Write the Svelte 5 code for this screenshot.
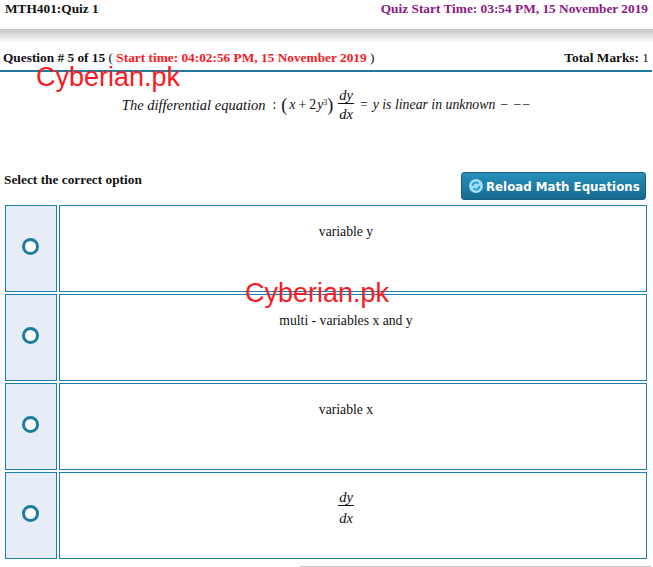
<script>
    const options = [
        { text: "variable y" },
        { text: "multi - variables x and y" },
        { text: "variable x" },
        { fraction: true }
    ];
</script>

<div class="topbar">
    <b class="course">MTH401:Quiz 1</b>
    <b class="quizTime">Quiz Start Time: 03:54 PM, 15 November 2019</b>
</div>
<div class="shadow"></div>

<section class="page">
    <div class="questionHead">
        <span><b>Question # 5 of 15</b> ( <b class="red">Start time: 04:02:56 PM, 15 November 2019</b> )</span>
        <span><b>Total Marks:</b> 1</span>
    </div>

    <div class="equation">
        <i class="lead">The differential equation</i>
        <span class="colon">:</span>
        <span class="group"><span class="paren">(</span><i>x</i><span class="plus">+</span><span>2</span><i>y</i><sup>3</sup><span class="paren">)</span></span>
        <span class="frac eqFrac"><i>dy</i><i class="under">dx</i></span>
        <span class="equals">=</span>
        <i>y is linear in unknown</i>
        <span class="dashes">&minus; &minus;&minus;</span>
    </div>

    <div class="selectRow">
        <b>Select the correct option</b>
        <button class="reload">
            <svg width="14" height="14" viewBox="0 0 14 14">
                <circle cx="7" cy="7" r="7" fill="#a5dcf5" />
                <path d="M3.5 7a3.5 3.5 0 0 1 6-2.4M10.5 7a3.5 3.5 0 0 1-6 2.4" fill="none" stroke="#2b9fd6" stroke-width="2" />
            </svg>
            <span class="reloadText">Reload Math Equations</span>
        </button>
    </div>

    <div class="options">
        {#each options as option}
        <div class="row">
            <div class="pick"><span class="radio"></span></div>
            <div class="answer">
                {#if option.fraction}
                <span class="frac answerFrac"><i>dy</i><i class="under">dx</i></span>
                {:else}
                {option.text}
                {/if}
            </div>
        </div>
        {/each}
    </div>
    <div class="bottomLine"></div>

    <span class="mark markOne">Cyberian.pk</span>
    <span class="mark markTwo">Cyberian.pk</span>
</section>

<style>
    :global(body) {
        background: #fff;
        color: #111;
        font-family: "Liberation Serif", serif;
        font-size: 13.33px;
    }
    .topbar {
        display: flex;
        justify-content: space-between;
        align-items: center;
        height: 29px;
        padding: 0 5px 11px 5px;
        box-sizing: border-box;
    }
    .quizTime {
        color: #8a1a82;
    }
    .shadow {
        height: 14px;
        background: linear-gradient(#c4c4c4, #fff);
    }
    .page {
        position: relative;
    }
    .questionHead {
        display: flex;
        justify-content: space-between;
        align-items: center;
        height: 25px;
        margin-right: 1px;
        padding: 2px 3px 0;
        border-bottom: 2px solid #1f7a9c;
    }
    .red {
        color: #fb1a1f;
    }
    .equation {
        display: flex;
        justify-content: center;
        align-items: center;
        height: 36px;
        margin-top: 15px;
        font-size: 13.8px;
        white-space: pre;
    }
    .lead {
        font-size: 14.5px;
    }
    .group {
        display: flex;
        align-items: center;
    }
    .group sup {
        font-size: 8px;
        align-self: flex-start;
        margin-top: 3px;
    }
    .paren {
        font-size: 18px;
    }
    .group i {
        margin-left: 1px;
    }
    .group .paren:first-child {
        margin-right: 1px;
    }
    .group .plus {
        margin: 0 3px;
    }
    .colon {
        margin: 0 5px 0 7px;
    }
    .dashes {
        margin-left: 5px;
        letter-spacing: 1px;
    }
    .frac {
        display: inline-flex;
        flex-direction: column;
        align-items: center;
        line-height: 15px;
        font-size: 14.5px;
    }
    .eqFrac {
        margin: 0 6px 0 5px;
    }
    .equals {
        margin-right: 5px;
    }
    .under {
        border-top: 1px solid #111;
        padding: 3px 1px 0;
    }
    .answerFrac {
        position: relative;
        top: -1px;
    }
    .answerFrac .under {
        padding-top: 5px;
    }
    .selectRow {
        display: flex;
        justify-content: space-between;
        align-items: center;
        height: 28px;
        margin-top: 49px;
        padding: 0 7px 0 4px;
    }
    .selectRow b {
        position: relative;
        top: -6px;
    }
    .reload {
        display: flex;
        align-items: center;
        gap: 3px;
        width: 185px;
        height: 28px;
        padding: 0 0 0 7px;
        border: 1px solid #17607f;
        border-radius: 3px;
        background: linear-gradient(#2791bb, #176a8f);
        color: #fff;
        font-family: "DejaVu Sans", sans-serif;
        font-size: 11.8px;
        font-weight: bold;
    }
    .reloadText {
        position: relative;
        top: 1px;
    }
    .options {
        display: flex;
        flex-direction: column;
        gap: 2px;
        margin: 5px 6px 0 5px;
    }
    .row {
        display: flex;
        gap: 2px;
        height: 87px;
    }
    .pick, .answer {
        border: 1px solid #1b80ac;
        box-sizing: border-box;
    }
    .pick {
        display: flex;
        justify-content: center;
        align-items: center;
        flex: 0 0 52px;
        padding: 0 1px 4px 0;
        background: #e6edf7;
    }
    .radio {
        width: 11px;
        height: 11px;
        border: 3px solid #1f7a9f;
        border-radius: 50%;
        background: #fff;
    }
    .answer {
        flex: 1;
        padding: 18px 14px 0 0;
        text-align: center;
        font-size: 13.7px;
    }
    .bottomLine {
        height: 1px;
        margin: 7px 2px 0 300px;
        background: #c4c4c4;
    }
    .mark {
        position: absolute;
        color: #fb1a1f;
        font-family: "Liberation Sans", sans-serif;
        font-size: 27px;
        line-height: 26px;
    }
    .markOne {
        left: 36px;
        top: 21px;
    }
    .markTwo {
        left: 245px;
        top: 237px;
    }
</style>
